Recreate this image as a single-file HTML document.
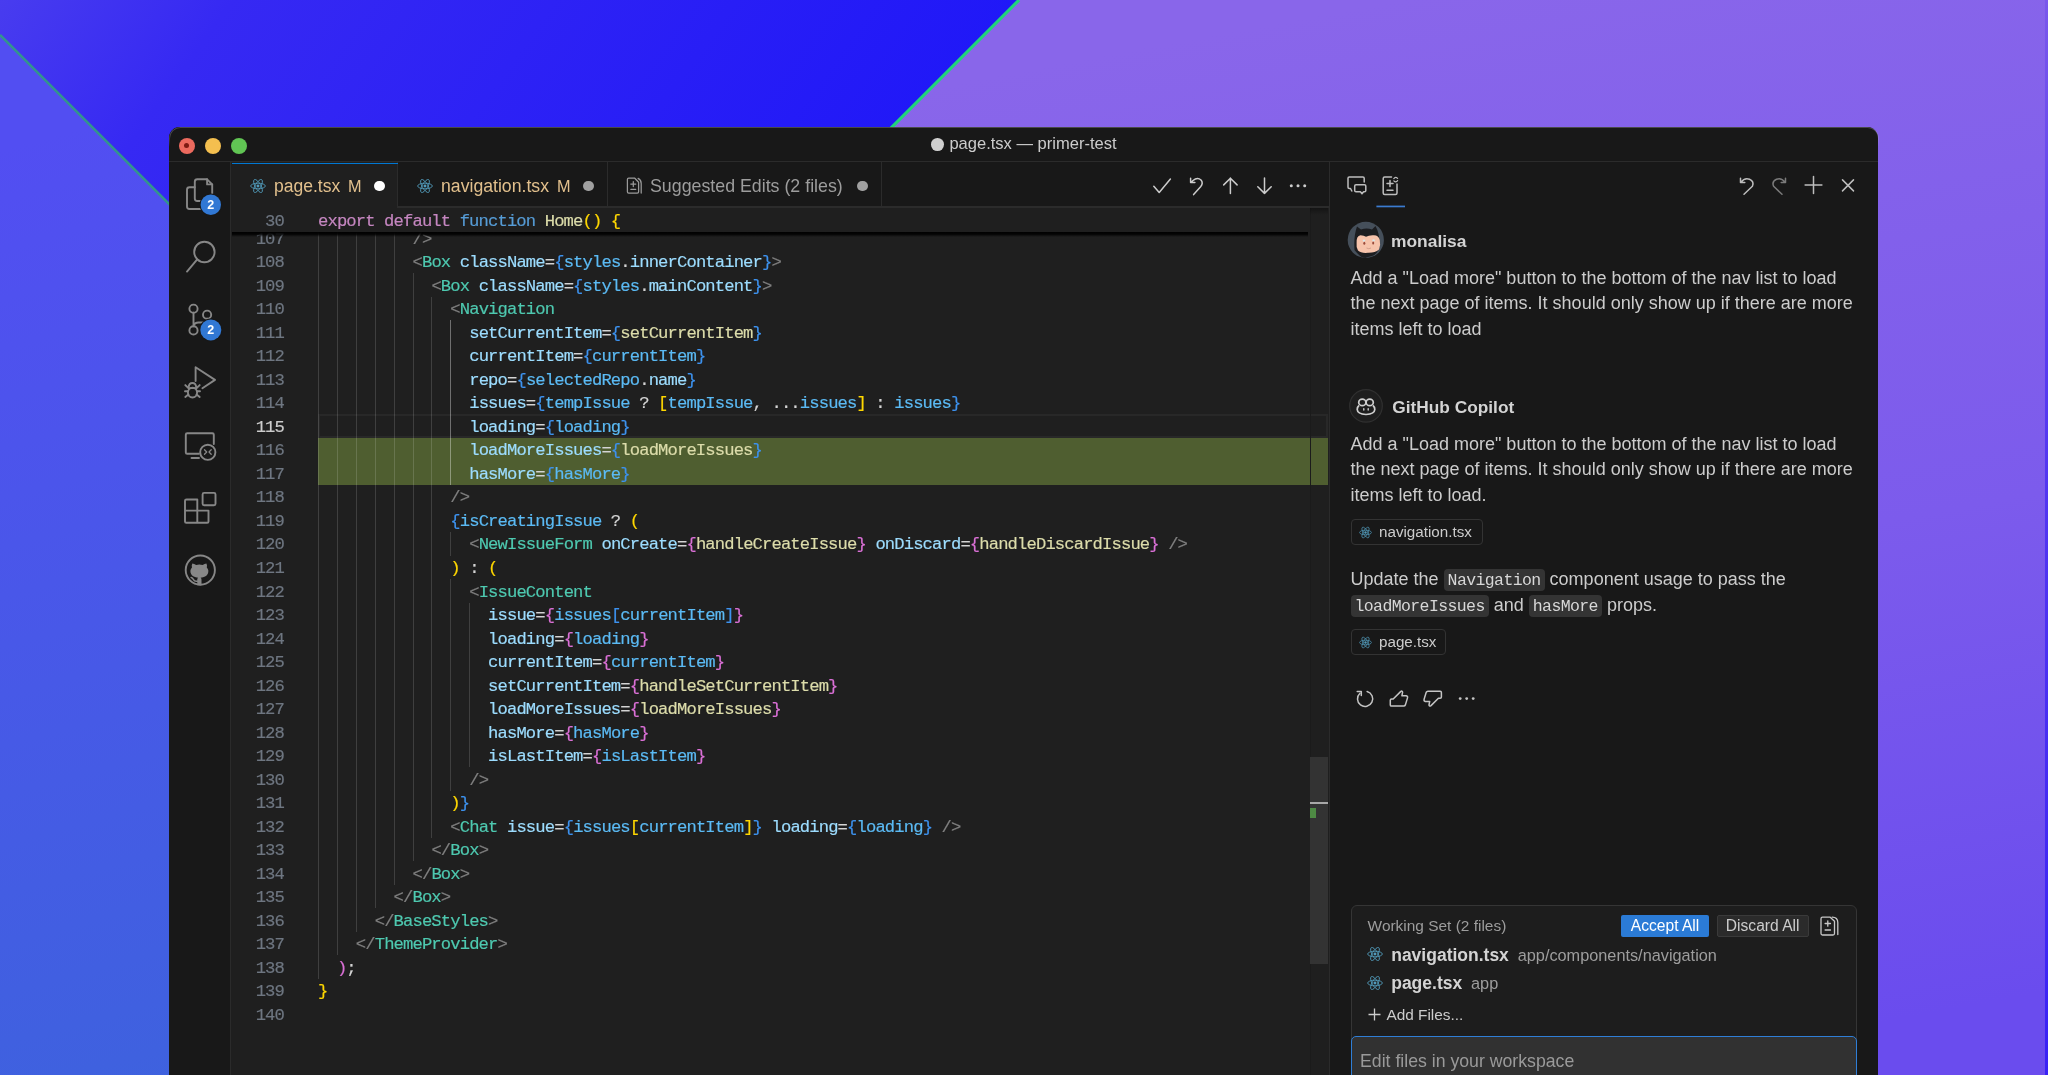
<!DOCTYPE html>
<html><head><meta charset="utf-8">
<style>
*{margin:0;padding:0;box-sizing:border-box}
html,body{width:2048px;height:1075px;overflow:hidden;background:#4a40f0}
body{position:relative;font-family:"Liberation Sans",sans-serif}
.abs{position:absolute}
#bg{position:absolute;left:0;top:0}
#win{position:absolute;left:169px;top:127px;width:1709px;height:960px;background:#1f1f1f;border-radius:11px 11px 0 0;overflow:hidden}
#winb{position:absolute;left:168.5px;top:126.5px;width:1710px;height:40px;border:1px solid rgba(200,200,200,0.28);border-bottom:none;border-radius:11.5px 11.5px 0 0;-webkit-mask-image:linear-gradient(#000 0,#000 8px,transparent 20px)}
#title{position:absolute;left:0;top:0;width:1709px;height:35px;background:#181818;border-bottom:1px solid #2b2b2b}
.tl{position:absolute;top:10.9px;width:16.2px;height:16.2px;border-radius:50%}
#titletext{position:absolute;top:0;left:0;width:1709px;text-align:center;line-height:35px;font-size:16.5px;color:#cccccc}
#act{position:absolute;left:0;top:35px;width:62px;height:930px;background:#181818;border-right:1px solid #2b2b2b}
#tabs{position:absolute;left:62px;top:35px;width:1098px;height:45px;background:#181818;border-bottom:1px solid #2b2b2b}
.tab{position:absolute;top:0;height:45px;border-right:1px solid #2b2b2b;font-size:17.6px;line-height:45px;white-space:pre}
#editor{position:absolute;left:62px;top:80px;width:1098px;height:900px;background:#1f1f1f}
#panel{position:absolute;left:1160px;top:35px;width:549px;height:930px;background:#181818;border-left:1px solid #2b2b2b}
/* code, absolute in page coords */
.ln{position:absolute;-webkit-text-stroke:0.18px;left:230px;width:54px;text-align:right;font-family:"Liberation Mono",monospace;font-size:17.2px;letter-spacing:-0.87px;line-height:23.52px;height:23.52px;color:#6e7681;white-space:pre}
.ln.act{color:#cccccc}
.cl{position:absolute;-webkit-text-stroke:0.18px;font-family:"Liberation Mono",monospace;font-size:17.2px;letter-spacing:-0.87px;line-height:23.52px;height:23.52px;white-space:pre}
.ig{position:absolute;width:1px;background:rgba(255,255,255,0.145)}
.ig.act{background:rgba(255,255,255,0.36)}
.tabt{font-size:17.54px;line-height:24px;white-space:pre}
.chip{border:1px solid #333;border-radius:4px}
.ic{font-family:"Liberation Mono",monospace;font-size:16.5px;background:#343434;border-radius:4px;padding:2px 4px 1px 4px;letter-spacing:-0.6px;color:#d8d8d8}
.ptxt{font-size:18px;color:#cccccc;line-height:25.4px;white-space:pre}
</style></head><body><div id="aawrap" style="position:absolute;left:0;top:0;width:2048px;height:1075px;overflow:hidden;will-change:transform">
<svg id="bg" width="2048" height="1075" viewBox="0 0 2048 1075">
  <defs>
    <linearGradient id="gA" gradientUnits="userSpaceOnUse" x1="0" y1="0" x2="700" y2="500">
      <stop offset="0" stop-color="#483cef"/>
      <stop offset="0.22" stop-color="#3629f3"/>
      <stop offset="1" stop-color="#1f17f8"/>
    </linearGradient>
    <linearGradient id="gB" gradientUnits="userSpaceOnUse" x1="0" y1="150" x2="250" y2="1075">
      <stop offset="0" stop-color="#524ef2"/>
      <stop offset="1" stop-color="#3e62de"/>
    </linearGradient>
    <linearGradient id="gC" gradientUnits="userSpaceOnUse" x1="1400" y1="0" x2="1600" y2="1075">
      <stop offset="0" stop-color="#8966ea"/>
      <stop offset="0.55" stop-color="#7c5bec"/>
      <stop offset="1" stop-color="#6a4cee"/>
    </linearGradient>
    <linearGradient id="gS" x1="0" y1="0" x2="0" y2="1">
      <stop offset="0" stop-color="#7a58ec"/>
      <stop offset="0.3" stop-color="#5a3cf0"/>
      <stop offset="1" stop-color="#3a22f5"/>
    </linearGradient>
  </defs>
  <rect x="0" y="0" width="2048" height="1075" fill="url(#gA)"/>
  <polygon points="0,35 493,528 493,1075 0,1075" fill="url(#gB)"/>
  <polygon points="1019,0 2048,0 2048,1075 493,1075 493,526" fill="url(#gC)"/>
  <rect x="2045" y="0" width="3" height="1075" fill="url(#gS)"/>
  <line x1="0" y1="35" x2="400" y2="435" stroke="#33948e" stroke-width="2.6"/>
  <line x1="1019" y1="0" x2="619" y2="400" stroke="#1fd57a" stroke-width="3.2"/>
</svg>

<div id="win">
  <div id="title">
    <div class="tl" style="left:9.9px;background:#ec6a5e"><div style="position:absolute;left:5.6px;top:5.6px;width:5px;height:5px;border-radius:50%;background:#7e1a12"></div></div>
    <div class="tl" style="left:35.9px;background:#f4bf4f"></div>
    <div class="tl" style="left:61.9px;background:#61c554"></div>
    <div class="abs" style="left:762px;top:11.3px;width:12.8px;height:12.8px;border-radius:50%;background:#cfcfcf"></div><div class="abs" style="left:780.4px;top:5px;font-size:16.55px;line-height:24px;color:#cccccc;white-space:pre">page.tsx — primer-test</div>
  </div>
  <div id="act"></div>
  <div id="tabs"></div>
  <div id="editor"></div>
  <div id="panel"></div>
</div>

<div id="winb"></div>
<div class="abs" style="left:318px;top:437.90px;width:1010px;height:47.04px;background:#4f5e30"></div>
<div class="abs" style="left:318px;top:414.38px;width:1010px;height:23.52px;border:2px solid #282828"></div>
<div class="ig" style="left:318.0px;top:232.0px;height:746.9px"></div>
<div class="ig" style="left:336.9px;top:232.0px;height:723.3px"></div>
<div class="ig" style="left:355.8px;top:232.0px;height:699.8px"></div>
<div class="ig" style="left:374.7px;top:232.0px;height:676.3px"></div>
<div class="ig" style="left:393.6px;top:232.0px;height:652.8px"></div>
<div class="ig" style="left:412.5px;top:273.3px;height:588.0px"></div>
<div class="ig" style="left:431.4px;top:296.8px;height:541.0px"></div>
<div class="ig" style="left:450.3px;top:532.0px;height:23.5px"></div>
<div class="ig" style="left:450.3px;top:579.0px;height:211.7px"></div>
<div class="ig" style="left:469.2px;top:602.5px;height:164.6px"></div>
<div class="ig act" style="left:450.3px;top:320.3px;height:164.6px"></div>
<div class="ln" style="top:227.72px">107</div>
<div class="cl" style="top:227.72px;left:412.50px"><span style="color:#808080">/&gt;</span></div>
<div class="ln" style="top:251.24px">108</div>
<div class="cl" style="top:251.24px;left:412.50px"><span style="color:#808080">&lt;</span><span style="color:#4EC9B0">Box</span><span style="color:#D4D4D4"> </span><span style="color:#9CDCFE">className</span><span style="color:#D4D4D4">=</span><span style="color:#3d92ee">{</span><span style="color:#5bbaf4">styles</span><span style="color:#D4D4D4">.</span><span style="color:#9CDCFE">innerContainer</span><span style="color:#3d92ee">}</span><span style="color:#808080">&gt;</span></div>
<div class="ln" style="top:274.76px">109</div>
<div class="cl" style="top:274.76px;left:431.40px"><span style="color:#808080">&lt;</span><span style="color:#4EC9B0">Box</span><span style="color:#D4D4D4"> </span><span style="color:#9CDCFE">className</span><span style="color:#D4D4D4">=</span><span style="color:#3d92ee">{</span><span style="color:#5bbaf4">styles</span><span style="color:#D4D4D4">.</span><span style="color:#9CDCFE">mainContent</span><span style="color:#3d92ee">}</span><span style="color:#808080">&gt;</span></div>
<div class="ln" style="top:298.28px">110</div>
<div class="cl" style="top:298.28px;left:450.30px"><span style="color:#808080">&lt;</span><span style="color:#4EC9B0">Navigation</span></div>
<div class="ln" style="top:321.80px">111</div>
<div class="cl" style="top:321.80px;left:469.20px"><span style="color:#9CDCFE">setCurrentItem</span><span style="color:#D4D4D4">=</span><span style="color:#3d92ee">{</span><span style="color:#DCDCAA">setCurrentItem</span><span style="color:#3d92ee">}</span></div>
<div class="ln" style="top:345.32px">112</div>
<div class="cl" style="top:345.32px;left:469.20px"><span style="color:#9CDCFE">currentItem</span><span style="color:#D4D4D4">=</span><span style="color:#3d92ee">{</span><span style="color:#5bbaf4">currentItem</span><span style="color:#3d92ee">}</span></div>
<div class="ln" style="top:368.84px">113</div>
<div class="cl" style="top:368.84px;left:469.20px"><span style="color:#9CDCFE">repo</span><span style="color:#D4D4D4">=</span><span style="color:#3d92ee">{</span><span style="color:#5bbaf4">selectedRepo</span><span style="color:#D4D4D4">.</span><span style="color:#9CDCFE">name</span><span style="color:#3d92ee">}</span></div>
<div class="ln" style="top:392.36px">114</div>
<div class="cl" style="top:392.36px;left:469.20px"><span style="color:#9CDCFE">issues</span><span style="color:#D4D4D4">=</span><span style="color:#3d92ee">{</span><span style="color:#5bbaf4">tempIssue</span><span style="color:#D4D4D4"> ? </span><span style="color:#FFD700">[</span><span style="color:#5bbaf4">tempIssue</span><span style="color:#D4D4D4">, ...</span><span style="color:#5bbaf4">issues</span><span style="color:#FFD700">]</span><span style="color:#D4D4D4"> : </span><span style="color:#5bbaf4">issues</span><span style="color:#3d92ee">}</span></div>
<div class="ln act" style="top:415.88px">115</div>
<div class="cl" style="top:415.88px;left:469.20px"><span style="color:#9CDCFE">loading</span><span style="color:#D4D4D4">=</span><span style="color:#3d92ee">{</span><span style="color:#5bbaf4">loading</span><span style="color:#3d92ee">}</span></div>
<div class="ln" style="top:439.40px">116</div>
<div class="cl" style="top:439.40px;left:469.20px"><span style="color:#9CDCFE">loadMoreIssues</span><span style="color:#D4D4D4">=</span><span style="color:#3d92ee">{</span><span style="color:#DCDCAA">loadMoreIssues</span><span style="color:#3d92ee">}</span></div>
<div class="ln" style="top:462.92px">117</div>
<div class="cl" style="top:462.92px;left:469.20px"><span style="color:#9CDCFE">hasMore</span><span style="color:#D4D4D4">=</span><span style="color:#3d92ee">{</span><span style="color:#5bbaf4">hasMore</span><span style="color:#3d92ee">}</span></div>
<div class="ln" style="top:486.44px">118</div>
<div class="cl" style="top:486.44px;left:450.30px"><span style="color:#808080">/&gt;</span></div>
<div class="ln" style="top:509.96px">119</div>
<div class="cl" style="top:509.96px;left:450.30px"><span style="color:#3d92ee">{</span><span style="color:#5bbaf4">isCreatingIssue</span><span style="color:#D4D4D4"> ? </span><span style="color:#FFD700">(</span></div>
<div class="ln" style="top:533.48px">120</div>
<div class="cl" style="top:533.48px;left:469.20px"><span style="color:#808080">&lt;</span><span style="color:#4EC9B0">NewIssueForm</span><span style="color:#D4D4D4"> </span><span style="color:#9CDCFE">onCreate</span><span style="color:#D4D4D4">=</span><span style="color:#DA70D6">{</span><span style="color:#DCDCAA">handleCreateIssue</span><span style="color:#DA70D6">}</span><span style="color:#D4D4D4"> </span><span style="color:#9CDCFE">onDiscard</span><span style="color:#D4D4D4">=</span><span style="color:#DA70D6">{</span><span style="color:#DCDCAA">handleDiscardIssue</span><span style="color:#DA70D6">}</span><span style="color:#808080"> /&gt;</span></div>
<div class="ln" style="top:557.00px">121</div>
<div class="cl" style="top:557.00px;left:450.30px"><span style="color:#FFD700">)</span><span style="color:#D4D4D4"> : </span><span style="color:#FFD700">(</span></div>
<div class="ln" style="top:580.52px">122</div>
<div class="cl" style="top:580.52px;left:469.20px"><span style="color:#808080">&lt;</span><span style="color:#4EC9B0">IssueContent</span></div>
<div class="ln" style="top:604.04px">123</div>
<div class="cl" style="top:604.04px;left:488.10px"><span style="color:#9CDCFE">issue</span><span style="color:#D4D4D4">=</span><span style="color:#DA70D6">{</span><span style="color:#5bbaf4">issues</span><span style="color:#3d92ee">[</span><span style="color:#5bbaf4">currentItem</span><span style="color:#3d92ee">]</span><span style="color:#DA70D6">}</span></div>
<div class="ln" style="top:627.56px">124</div>
<div class="cl" style="top:627.56px;left:488.10px"><span style="color:#9CDCFE">loading</span><span style="color:#D4D4D4">=</span><span style="color:#DA70D6">{</span><span style="color:#5bbaf4">loading</span><span style="color:#DA70D6">}</span></div>
<div class="ln" style="top:651.08px">125</div>
<div class="cl" style="top:651.08px;left:488.10px"><span style="color:#9CDCFE">currentItem</span><span style="color:#D4D4D4">=</span><span style="color:#DA70D6">{</span><span style="color:#5bbaf4">currentItem</span><span style="color:#DA70D6">}</span></div>
<div class="ln" style="top:674.60px">126</div>
<div class="cl" style="top:674.60px;left:488.10px"><span style="color:#9CDCFE">setCurrentItem</span><span style="color:#D4D4D4">=</span><span style="color:#DA70D6">{</span><span style="color:#DCDCAA">handleSetCurrentItem</span><span style="color:#DA70D6">}</span></div>
<div class="ln" style="top:698.12px">127</div>
<div class="cl" style="top:698.12px;left:488.10px"><span style="color:#9CDCFE">loadMoreIssues</span><span style="color:#D4D4D4">=</span><span style="color:#DA70D6">{</span><span style="color:#DCDCAA">loadMoreIssues</span><span style="color:#DA70D6">}</span></div>
<div class="ln" style="top:721.64px">128</div>
<div class="cl" style="top:721.64px;left:488.10px"><span style="color:#9CDCFE">hasMore</span><span style="color:#D4D4D4">=</span><span style="color:#DA70D6">{</span><span style="color:#5bbaf4">hasMore</span><span style="color:#DA70D6">}</span></div>
<div class="ln" style="top:745.16px">129</div>
<div class="cl" style="top:745.16px;left:488.10px"><span style="color:#9CDCFE">isLastItem</span><span style="color:#D4D4D4">=</span><span style="color:#DA70D6">{</span><span style="color:#5bbaf4">isLastItem</span><span style="color:#DA70D6">}</span></div>
<div class="ln" style="top:768.68px">130</div>
<div class="cl" style="top:768.68px;left:469.20px"><span style="color:#808080">/&gt;</span></div>
<div class="ln" style="top:792.20px">131</div>
<div class="cl" style="top:792.20px;left:450.30px"><span style="color:#FFD700">)</span><span style="color:#3d92ee">}</span></div>
<div class="ln" style="top:815.72px">132</div>
<div class="cl" style="top:815.72px;left:450.30px"><span style="color:#808080">&lt;</span><span style="color:#4EC9B0">Chat</span><span style="color:#D4D4D4"> </span><span style="color:#9CDCFE">issue</span><span style="color:#D4D4D4">=</span><span style="color:#3d92ee">{</span><span style="color:#5bbaf4">issues</span><span style="color:#FFD700">[</span><span style="color:#5bbaf4">currentItem</span><span style="color:#FFD700">]</span><span style="color:#3d92ee">}</span><span style="color:#D4D4D4"> </span><span style="color:#9CDCFE">loading</span><span style="color:#D4D4D4">=</span><span style="color:#3d92ee">{</span><span style="color:#5bbaf4">loading</span><span style="color:#3d92ee">}</span><span style="color:#808080"> /&gt;</span></div>
<div class="ln" style="top:839.24px">133</div>
<div class="cl" style="top:839.24px;left:431.40px"><span style="color:#808080">&lt;/</span><span style="color:#4EC9B0">Box</span><span style="color:#808080">&gt;</span></div>
<div class="ln" style="top:862.76px">134</div>
<div class="cl" style="top:862.76px;left:412.50px"><span style="color:#808080">&lt;/</span><span style="color:#4EC9B0">Box</span><span style="color:#808080">&gt;</span></div>
<div class="ln" style="top:886.28px">135</div>
<div class="cl" style="top:886.28px;left:393.60px"><span style="color:#808080">&lt;/</span><span style="color:#4EC9B0">Box</span><span style="color:#808080">&gt;</span></div>
<div class="ln" style="top:909.80px">136</div>
<div class="cl" style="top:909.80px;left:374.70px"><span style="color:#808080">&lt;/</span><span style="color:#4EC9B0">BaseStyles</span><span style="color:#808080">&gt;</span></div>
<div class="ln" style="top:933.32px">137</div>
<div class="cl" style="top:933.32px;left:355.80px"><span style="color:#808080">&lt;/</span><span style="color:#4EC9B0">ThemeProvider</span><span style="color:#808080">&gt;</span></div>
<div class="ln" style="top:956.84px">138</div>
<div class="cl" style="top:956.84px;left:336.90px"><span style="color:#DA70D6">)</span><span style="color:#D4D4D4">;</span></div>
<div class="ln" style="top:980.36px">139</div>
<div class="cl" style="top:980.36px;left:318.00px"><span style="color:#FFD700">}</span></div>
<div class="ln" style="top:1003.88px">140</div>
<div class="cl" style="top:1003.88px;left:318.00px"></div>

<!-- REACT ICON symbol -->
<svg width="0" height="0" style="position:absolute">
  <defs>
    <symbol id="react" viewBox="-12 -12 24 24">
      <g fill="none" stroke="#519aba" stroke-width="1.3">
        <ellipse rx="11" ry="4.2"/>
        <ellipse rx="11" ry="4.2" transform="rotate(60)"/>
        <ellipse rx="11" ry="4.2" transform="rotate(120)"/>
      </g>
      <circle r="2.2" fill="#519aba"/>
    </symbol>
  </defs>
</svg>

<!-- TABS -->
<div class="abs" style="left:231px;top:162px;width:167px;height:46px;background:#1f1f1f;border-right:1px solid #2b2b2b"></div>
<div class="abs" style="left:231.5px;top:162.5px;width:166.5px;height:1.8px;background:#0078d4"></div>
<div class="abs" style="left:398px;top:162px;width:210px;height:46px;border-right:1px solid #2b2b2b;border-bottom:1px solid #2b2b2b"></div>
<div class="abs" style="left:608px;top:162px;width:274px;height:46px;border-right:1px solid #2b2b2b;border-bottom:1px solid #2b2b2b"></div>
<div class="abs" style="left:882px;top:162px;width:447px;height:46px;border-bottom:1px solid #2b2b2b"></div>

<svg class="abs" style="left:249.5px;top:177.5px" width="16" height="16"><use href="#react"/></svg>
<div class="abs tabt" style="left:274px;top:174px;color:#e2c08d">page.tsx</div>
<div class="abs tabt" style="left:348px;top:174px;color:#e2c08d;font-size:16.3px;line-height:24px">M</div>
<div class="abs" style="left:374px;top:180.5px;width:10.5px;height:10.5px;border-radius:50%;background:#ffffff"></div>

<svg class="abs" style="left:417px;top:177.5px" width="16" height="16"><use href="#react"/></svg>
<div class="abs tabt" style="left:441px;top:174px;color:#e2c08d;font-size:17.66px">navigation.tsx</div>
<div class="abs tabt" style="left:557px;top:174px;color:#e2c08d;font-size:16.3px;line-height:24px">M</div>
<div class="abs" style="left:583px;top:180.5px;width:10.5px;height:10.5px;border-radius:50%;background:#a0a0a0"></div>

<svg class="abs" style="left:622px;top:174px" width="24" height="24" viewBox="622 174 24 24">
  <g fill="none" stroke="#9a9a9a" stroke-width="1.25" stroke-linejoin="round" stroke-linecap="round">
    <path d="M627.4 179.5Q627.4 178.2 628.7 178.2H634.8L638.6 182.2V191.8Q638.6 193.1 637.3 193.1H628.7Q627.4 193.1 627.4 191.8Z"/>
    <path d="M638.1 178.4Q641.2 180 641.2 183.5V193"/>
    <path d="M633.3 181.6V186.6M630.8 184.1H635.8M630.9 189.4H635.7"/>
  </g>
</svg>
<div class="abs tabt" style="left:650px;top:174px;color:#9d9d9d;font-size:17.8px">Suggested Edits (2 files)</div>
<div class="abs" style="left:857px;top:180.5px;width:10.5px;height:10.5px;border-radius:50%;background:#a0a0a0"></div>

<!-- editor toolbar icons -->
<svg class="abs" style="left:1140px;top:168px" width="180" height="36" viewBox="1140 168 180 36">
  <g fill="none" stroke="#cccccc" stroke-width="1.5" stroke-linecap="round" stroke-linejoin="round">
    <path d="M1153.8 186.2L1159.2 192.4L1170.4 179"/>
    <path d="M1193.6 194.6L1200.6 186.8Q1203.6 183 1201 180Q1197.5 176.8 1193 180.5L1191.5 182M1190.6 178.3V182.6H1194.9"/>
    <path d="M1230.4 193.5V178M1223.7 184.9L1230.4 178.2L1237.1 184.9"/>
    <path d="M1264.5 177.9V193.4M1257.8 186.7L1264.5 193.4L1271.2 186.7"/>
  </g>
  <g fill="#cccccc"><circle cx="1291.3" cy="185.7" r="1.5"/><circle cx="1298" cy="185.7" r="1.5"/><circle cx="1304.7" cy="185.7" r="1.5"/></g>
</svg>

<!-- scrollbar -->
<div class="abs" style="left:1310px;top:208px;width:1px;height:867px;background:#1b1b1b"></div>
<div class="abs" style="left:1310px;top:208px;width:18px;height:7px;background:linear-gradient(rgba(0,0,0,0.35),rgba(0,0,0,0))"></div>
<div class="abs" style="left:1310px;top:757px;width:18px;height:206.5px;background:#333333"></div>
<div class="abs" style="left:1310px;top:801.5px;width:18px;height:2px;background:#a8a8a8"></div>
<div class="abs" style="left:1310px;top:808px;width:6px;height:10px;background:#4e8a44"></div>

<!-- sticky scroll -->
<div class="abs" style="left:231px;top:208px;width:1078px;height:24px;background:#1f1f1f"></div>
<div class="abs" style="left:232px;top:231.5px;width:1076px;height:5px;background:linear-gradient(#000000 0,rgba(0,0,0,0.85) 45%,rgba(0,0,0,0) 100%)"></div>
<div class="abs ln" style="top:210px">30</div>
<div class="abs cl" style="left:318px;top:210px"><span style="color:#C586C0">export default</span> <span style="color:#569CD6">function</span> <span style="color:#DCDCAA">Home</span><span style="color:#FFD700">()</span> <span style="color:#FFD700">{</span></div>

<!-- ACTIVITY BAR ICONS -->
<svg class="abs" style="left:169px;top:162px" width="62" height="450" viewBox="169 162 62 450">
  <g fill="none" stroke="#878787" stroke-width="1.9" stroke-linejoin="round" stroke-linecap="round">
    <!-- explorer -->
    <path d="M194.8 187.2H189.5Q187 187.2 187 189.7V206.5Q187 209 189.5 209H203"/>
    <path d="M197.3 179.3H207.1L212.2 184.4V198.5Q212.2 201 209.7 201H197.3Q194.8 201 194.8 198.5V181.8Q194.8 179.3 197.3 179.3Z"/>
    <path d="M207.1 179.3V184.4H212.2"/>
    <!-- search -->
    <circle cx="204.4" cy="252" r="10.2"/>
    <path d="M197.2 259.4L187 271.6"/>
    <!-- scm -->
    <circle cx="193.5" cy="308.7" r="4.1"/>
    <circle cx="207.1" cy="314.7" r="4.1"/>
    <circle cx="193.5" cy="330.4" r="4.1"/>
    <path d="M193.5 312.8V326.3M193.5 326Q194.5 322.5 198.5 322.5H203.5Q207.1 322.5 207.1 318.8"/>
    <!-- run & debug -->
    <path d="M195.6 381V367.2L215 379.9L202.4 388.3"/>
    <path d="M188.6 387.3Q189 383 192.4 383Q195.8 383 196.3 387.3"/>
    <ellipse cx="192.5" cy="392.6" rx="4.6" ry="4.9"/>
    <path d="M188.2 388.1H196.8M185.3 385.1L188.4 388M199.7 385.1L196.6 388M185 391.3H188M197 391.3H200M185.3 397L188.4 394.4M199.7 397L196.6 394.4"/>
    <!-- remote -->
    <path d="M199 453.8H187.2Q185.8 453.8 185.8 452.4V434.7Q185.8 433.3 187.2 433.3H212.4Q213.8 433.3 213.8 434.7V444"/>
    <path d="M191.5 458H199"/>
    <circle cx="207.8" cy="452.3" r="7.6"/>
    <path d="M204.5 449.8l2.2 2.2l-2.2 2.2M211.2 449.8l-2.2 2.2l2.2 2.2" stroke-width="1.3"/>
    <!-- extensions -->
    <path d="M186.5 499.5H197.3V510.6H208.5V521.5Q208.5 522.8 207.2 522.8H186.3Q185 522.8 185 521.5V500.8Q185 499.5 186.5 499.5ZM185 510.6H197.3V522.8"/>
    <rect x="202.6" y="492.9" width="12.9" height="12.3" rx="1.5"/>
    <!-- github -->
    <circle cx="200.3" cy="570.1" r="14.6"/>
  </g>
  <!-- github octocat silhouette -->
  <g transform="translate(200.5 570) scale(1.12) translate(-200.1 -570)">
  <path fill="#878787" d="M197.2 583.6v-4.3q-.3-1.6 .8-2.4q-4.8-.6-6.3-3.4q-1.6-3.2 .8-5.8q-.6-2 .3-3.6q1.6 0 3.4 1.4q2.9-.9 5.8 0q1.8-1.4 3.4-1.4q.9 1.6 .3 3.6q2.4 2.6 .8 5.8q-1.5 2.8-6.3 3.4q1.1 .8 .8 2.4v4.3z"/>
  <path fill="none" stroke="#878787" stroke-width="1.3" stroke-linecap="round" d="M197.4 580q-2.6 .6-3.7-1.6q-.7-1.4-2-1.7"/>
  </g>
  <!-- badges -->
  <circle cx="210.8" cy="204.7" r="11.2" fill="#181818"/>
  <circle cx="210.8" cy="204.7" r="10.2" fill="#3178d4"/>
  <text x="210.8" y="209.2" text-anchor="middle" font-family="Liberation Sans" font-weight="bold" font-size="12.5" fill="#ffffff">2</text>
  <circle cx="210.8" cy="329.9" r="11.5" fill="#181818"/>
  <circle cx="210.8" cy="329.9" r="10.5" fill="#3178d4"/>
  <text x="210.8" y="334.4" text-anchor="middle" font-family="Liberation Sans" font-weight="bold" font-size="12.5" fill="#ffffff">2</text>
</svg>

<!-- PANEL HEADER ICONS -->
<svg class="abs" style="left:1330px;top:162px" width="548" height="50" viewBox="1330 162 548 50">
  <g fill="none" stroke="#bdbdbd" stroke-width="1.5" stroke-linejoin="round" stroke-linecap="round">
    <path d="M1364.2 182V178.3Q1364.2 177 1362.9 177H1349.3Q1348 177 1348 178.3V187.3Q1348 188.5 1349.3 188.5H1350.5L1351.8 191"/>
    <path d="M1356 184.8H1364.5Q1365.8 184.8 1365.8 186.1V190.4Q1365.8 191.7 1364.5 191.7H1363.6L1362 193.8L1360.4 191.7H1356Q1354.7 191.7 1354.7 190.4V186.1Q1354.7 184.8 1356 184.8Z"/>
    <path d="M1391.5 176.9H1384.7Q1383.2 176.9 1383.2 178.4V193Q1383.2 194.5 1384.7 194.5H1395.5Q1397 194.5 1397 193V184"/>
    <path d="M1390 180.5V186.5M1387 183.5H1393M1387 190.3H1393"/>
    <path d="M1393.8 178.6Q1395.5 176.2 1397.6 178.4M1393.8 180.8Q1395.9 182.9 1397.6 180.6" stroke-width="1.2"/>
    <path d="M1740.5 178.3V182.6H1744.8M1741 182.3Q1744.5 177.5 1749.5 179.3Q1754.5 181.5 1752.4 186.3L1744 194.3"/>
    <path d="M1813.5 176.6V193.4M1805.1 185H1821.9"/>
    <path d="M1842.5 179.9L1853.5 190.9M1853.5 179.9L1842.5 190.9"/>
  </g>
  <g fill="none" stroke="#7a7a7a" stroke-width="1.5" stroke-linejoin="round" stroke-linecap="round">
    <path d="M1785.5 178.3V182.6H1781.2M1785 182.3Q1781.5 177.5 1776.5 179.3Q1771.5 181.5 1773.6 186.3L1782 194.3"/>
  </g>
  <rect x="1376.4" y="205.6" width="28.6" height="1.7" fill="#3b7bd0"/>
</svg>

<!-- monalisa avatar -->
<svg class="abs" style="left:1346px;top:220px" width="40" height="40" viewBox="1346 220 40 40">
  <defs><clipPath id="avc"><circle cx="1365.8" cy="239.9" r="18.1"/></clipPath></defs>
  <circle cx="1365.8" cy="239.9" r="18.1" fill="#454f5a"/>
  <g clip-path="url(#avc)">
    <path d="M1354.5 250 Q1353.5 236 1357 226.5 L1361 229.5 Q1366.5 227.5 1372 229.5 L1375.5 226 Q1380 234 1379.5 246 Q1378 254 1372 256 L1368 257 L1364 258.5 Q1359 256 1354.5 250Z" fill="#1c1d20"/>
    <path d="M1356.6 243 Q1356.2 236 1360.5 235.2 Q1364 235.6 1366 236.8 Q1368.5 235.6 1372.5 235.3 Q1378.5 234.5 1379.8 240 Q1380.8 245 1379 249.5 Q1375 253 1368 252.8 Q1361 253.5 1358 250.5 Q1356 247.5 1356.6 243Z" fill="#f6c3ab"/>
    <ellipse cx="1364" cy="240.6" rx="1.3" ry="1.1" fill="#d8e8ea"/>
    <ellipse cx="1373.6" cy="240.4" rx="1.3" ry="1.1" fill="#d8e8ea"/>
    <ellipse cx="1364.3" cy="243.2" rx="1" ry="1.5" fill="#9a4a3a"/>
    <ellipse cx="1373.2" cy="243" rx="1" ry="1.5" fill="#9a4a3a"/>
    <path d="M1366.5 248 Q1368.8 249.4 1371 248" stroke="#c08a78" stroke-width=".6" fill="none"/>
  </g>
</svg>
<div class="abs" style="left:1391px;top:228.8px;font-size:17.4px;font-weight:bold;color:#d4d4d4;line-height:24px">monalisa</div>
<div class="abs ptxt" style="left:1350.5px;top:266.06px">Add a "Load more" button to the bottom of the nav list to load
the next page of items. It should only show up if there are more
items left to load</div>

<!-- copilot avatar -->
<svg class="abs" style="left:1346px;top:386px" width="40" height="40" viewBox="1346 386 40 40">
  <circle cx="1366" cy="405.9" r="16.3" fill="#1e1e1e" stroke="#303030" stroke-width="1.2"/>
  <g fill="none" stroke="#cfcfcf" stroke-width="1.7">
    <ellipse cx="1362.3" cy="402.4" rx="3.6" ry="3.3"/>
    <ellipse cx="1369.7" cy="402.4" rx="3.6" ry="3.3"/>
    <path d="M1359 405.5Q1357.2 407 1357.2 409.5Q1357.5 414 1366 414.5Q1374.5 414 1374.8 409.5Q1374.8 407 1373 405.5"/>
  </g>
  <g fill="#cfcfcf"><rect x="1363.1" y="408" width="1.4" height="2.8" rx=".7"/><rect x="1367.5" y="408" width="1.4" height="2.8" rx=".7"/></g>
</svg>
<div class="abs" style="left:1392.3px;top:394.7px;font-size:17.3px;font-weight:bold;color:#d4d4d4;line-height:24px">GitHub Copilot</div>
<div class="abs ptxt" style="left:1350.5px;top:431.86px">Add a "Load more" button to the bottom of the nav list to load
the next page of items. It should only show up if there are more
items left to load.</div>

<!-- chip navigation.tsx -->
<div class="abs chip" style="left:1350.6px;top:519px;width:132px;height:25.5px"></div>
<svg class="abs" style="left:1359px;top:526px" width="13" height="13"><use href="#react"/></svg>
<div class="abs" style="left:1379px;top:519px;font-size:15.2px;line-height:25.5px;color:#cccccc">navigation.tsx</div>

<div class="abs ptxt" style="left:1350.5px;top:566.8px">Update the <span class="ic">Navigation</span> component usage to pass the</div>
<div class="abs ptxt" style="left:1350.5px;top:592.9px"><span class="ic" style="margin-left:0">loadMoreIssues</span> and <span class="ic">hasMore</span> props.</div>

<!-- chip page.tsx -->
<div class="abs chip" style="left:1350.6px;top:629px;width:95.5px;height:25.5px"></div>
<svg class="abs" style="left:1359px;top:636px" width="13" height="13"><use href="#react"/></svg>
<div class="abs" style="left:1379px;top:629px;font-size:15.2px;line-height:25.5px;color:#cccccc">page.tsx</div>

<!-- actions -->
<svg class="abs" style="left:1350px;top:684px" width="130" height="28" viewBox="1350 684 130 28">
  <g fill="none" stroke="#c4c4c4" stroke-width="1.5" stroke-linejoin="round" stroke-linecap="round">
    <path d="M1367.1 691.5A7.6 7.6 0 1 1 1360 693.2"/>
    <path d="M1357.2 691.6H1361.3V695.5"/>
    <path d="M1390.3 700.2Q1390.3 699 1391.5 699H1393.2L1400.6 691.6Q1402.2 690.4 1402.6 692.2L1401.9 695.8H1406.3Q1407.9 696.2 1407.5 697.9L1405.4 704.9Q1404.9 706.1 1403.7 706.1H1391.5Q1390.3 706.1 1390.3 704.9Z"/>
    <path d="M1441.4 697Q1441.4 698.2 1440.2 698.2H1438.4L1431 705.6Q1429.4 706.8 1429 705L1429.7 701.4H1425.3Q1423.7 701 1424.1 699.3L1426.2 692.4Q1426.7 691.2 1427.9 691.2H1440.2Q1441.4 691.2 1441.4 692.4Z"/>
  </g>
  <g fill="#c4c4c4"><circle cx="1460.2" cy="698.6" r="1.4"/><circle cx="1466.7" cy="698.6" r="1.4"/><circle cx="1473.2" cy="698.6" r="1.4"/></g>
</svg>

<!-- working set -->
<div class="abs" style="left:1351px;top:904.6px;width:506px;height:200px;background:#1d1d1d;border:1px solid #353535;border-radius:6px"></div>
<div class="abs" style="left:1367.6px;top:914px;font-size:15.45px;line-height:24px;color:#9d9d9d">Working Set (2 files)</div>
<div class="abs" style="left:1621.4px;top:914.7px;width:87.3px;height:22.5px;background:#2b7bd6;border-radius:2px;color:#ffffff;font-size:15.6px;line-height:22.5px;text-align:center">Accept All</div>
<div class="abs" style="left:1716.7px;top:914.7px;width:92px;height:22.5px;background:#2b2b2b;border:1px solid #3a3a3a;border-radius:2px;color:#cccccc;font-size:15.6px;line-height:20.5px;text-align:center">Discard All</div>
<svg class="abs" style="left:1816px;top:912px" width="26" height="27" viewBox="1816 912 26 27">
  <g fill="none" stroke="#c8c8c8" stroke-width="1.3" stroke-linejoin="round" stroke-linecap="round">
    <path d="M1821 918.7Q1821 917.2 1822.5 917.2H1830.2L1834.5 921.3V933.5Q1834.5 935 1833 935H1822.5Q1821 935 1821 933.5Z"/>
    <path d="M1832.2 917.2Q1837.8 917.4 1837.8 922.5V934.5"/>
    <path d="M1827.8 920.8V926.2M1825.1 923.5H1830.5M1825.1 930H1830.5"/>
  </g>
</svg>
<svg class="abs" style="left:1367px;top:946px" width="16" height="16"><use href="#react"/></svg>
<div class="abs" style="left:1391.2px;top:942.5px;font-size:17.5px;font-weight:bold;line-height:24px;color:#d4d4d4;white-space:pre">navigation.tsx <span style="font-weight:normal;color:#9d9d9d;font-size:16.3px;margin-left:4px">app/components/navigation</span></div>
<svg class="abs" style="left:1367px;top:975px" width="16" height="16"><use href="#react"/></svg>
<div class="abs" style="left:1391.2px;top:971.3px;font-size:17.5px;font-weight:bold;line-height:24px;color:#d4d4d4;white-space:pre">page.tsx <span style="font-weight:normal;color:#9d9d9d;font-size:16.3px;margin-left:4px">app</span></div>
<svg class="abs" style="left:1367px;top:1007px" width="15" height="15" viewBox="0 0 15 15"><path d="M7.5 1.5V13.5M1.5 7.5H13.5" stroke="#cccccc" stroke-width="1.3"/></svg>
<div class="abs" style="left:1386.4px;top:1003px;font-size:15.4px;line-height:24px;color:#cccccc">Add Files...</div>

<!-- input -->
<div class="abs" style="left:1351px;top:1036.4px;width:506px;height:60px;background:#313131;border:1.5px solid #2f7ed6;border-radius:5px"></div>
<div class="abs" style="left:1360px;top:1049px;font-size:17.7px;line-height:24px;color:#9a9a9a">Edit files in your workspace</div>

</div></body></html>
